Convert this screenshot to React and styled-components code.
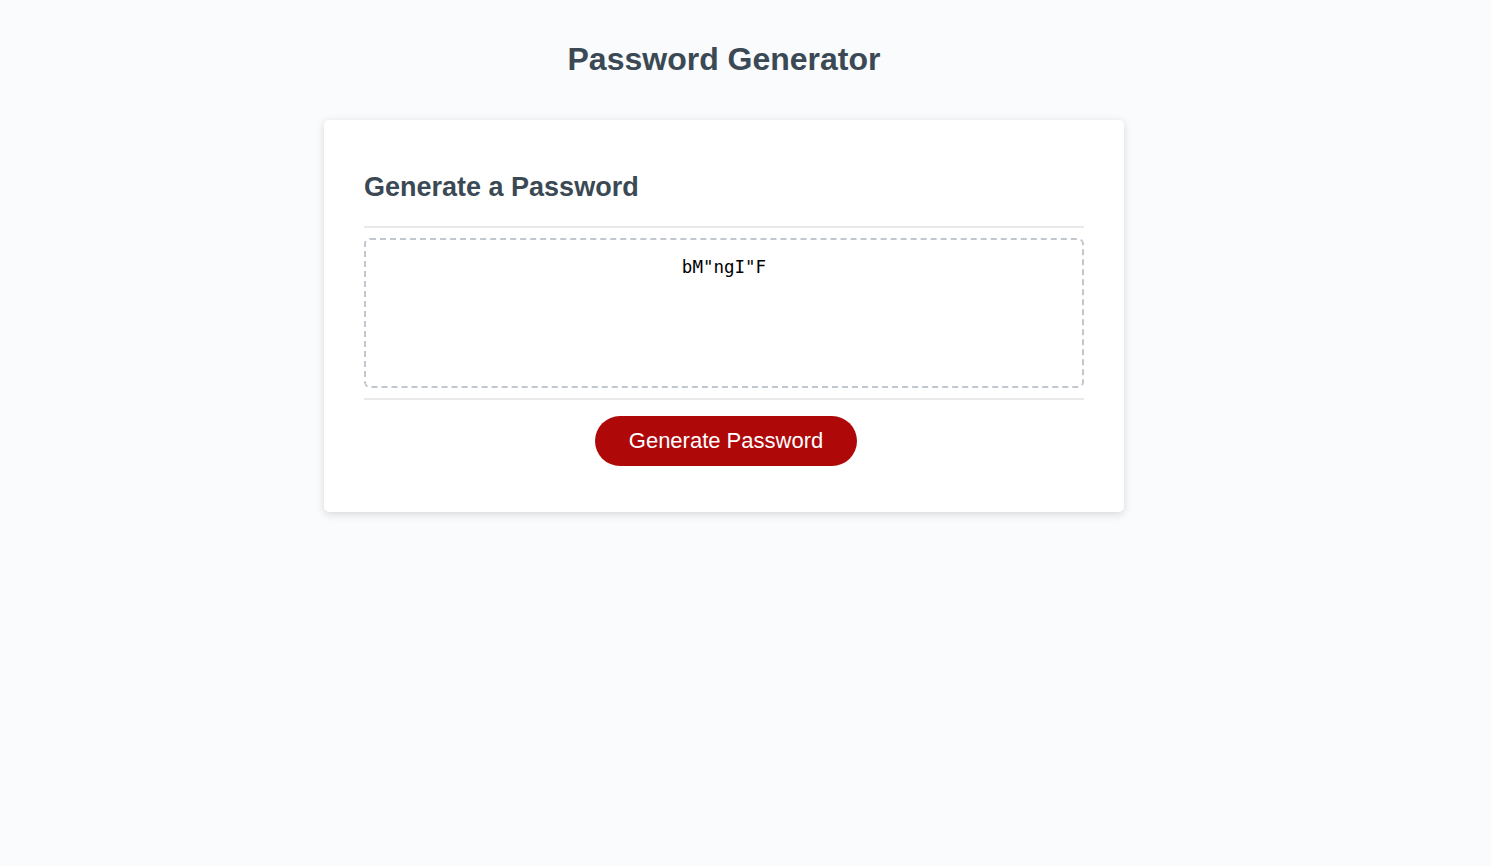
import React from "react";
import styled, { createGlobalStyle } from "styled-components";

const GlobalStyle = createGlobalStyle`
  * { box-sizing: border-box; }
  html, body { margin: 0; padding: 0; }
  body {
    font-family: "Liberation Sans", Arial, sans-serif;
    background-color: #f9fbfd;
  }
`;

const Page = styled.div`
  width: 1448px;
  padding: 0 20px 40px;
`;

const Header = styled.header`
  text-align: center;
  padding: 41px 20px 42px;
  color: hsl(206, 17%, 28%);
`;

const Title = styled.h1`
  margin: 0;
  font-size: 32px;
  font-weight: 700;
  line-height: 37px;
`;

const Card = styled.div`
  background-color: #fff;
  border-radius: 5px;
  box-shadow: rgba(0, 0, 0, 0.15) 0px 2px 8px 0px;
  color: hsl(206, 17%, 28%);
  font-size: 18px;
  margin: 0 auto;
  max-width: 800px;
  padding: 30px 40px;
`;

const Divider = styled.div`
  width: 100%;
  height: 2px;
  background: #e7e9eb;
`;

const CardHeader = styled.div``;

const CardTitle = styled.h2`
  margin: 22px 0 23px;
  font-size: 27px;
  font-weight: 700;
  line-height: 31px;
`;

const CardBody = styled.div`
  min-height: 100px;
`;

const PasswordBox = styled.textarea`
  appearance: none;
  display: block;
  width: 100%;
  height: 150px;
  margin: 10px 0;
  padding: 16px 15px 0;
  font-family: "DejaVu Sans Mono", "Liberation Mono", monospace;
  font-size: 17.5px;
  line-height: 22px;
  color: #000;
  text-align: center;
  border: 2px dashed #c0c7cf;
  border-radius: 6px;
  resize: none;
  overflow: hidden;
  background: #fff;
  outline: none;
`;

const CardFooter = styled.div`
  text-align: center;
`;

const Button = styled.button`
  border: none;
  background-color: hsl(360, 91%, 36%);
  border-radius: 25px;
  color: #fff;
  display: inline-block;
  font-family: "Liberation Sans", Arial, sans-serif;
  font-size: 22px;
  line-height: 22px;
  margin: 16px 16px 16px 20px;
  padding: 14px 34px;
  text-align: center;
  cursor: pointer;
`;

export default function App() {
  return (
    <>
      <GlobalStyle />
      <Page>
        <Header>
          <Title>Password Generator</Title>
        </Header>
        <Card>
          <CardHeader>
            <CardTitle>Generate a Password</CardTitle>
            <Divider />
          </CardHeader>
          <CardBody>
            <PasswordBox readOnly value={'bM"ngI"F'} aria-label="Generated Password" />
          </CardBody>
          <CardFooter>
            <Divider />
            <Button>Generate Password</Button>
          </CardFooter>
        </Card>
      </Page>
    </>
  );
}
